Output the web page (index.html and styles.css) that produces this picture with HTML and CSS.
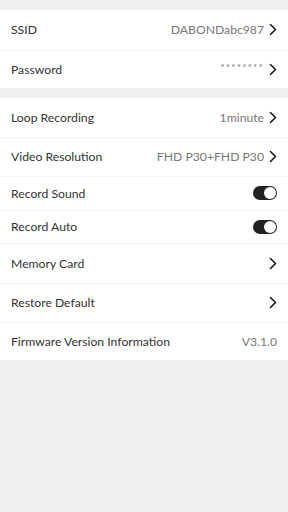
FILE: index.html
```html
<!DOCTYPE html>
<html>
<head>
<meta charset="utf-8">
<link rel="stylesheet" href="styles.css">
</head>
<body>
<div class="page">
  <div class="group">
    <div class="row h40"><span class="label">SSID</span><span class="value">DABONDabc987</span><svg class="chev" viewBox="0 0 8 13"><polyline points="1.5,1.5 6.5,6.5 1.5,11.5"/></svg></div>
    <div class="row h38"><span class="label">Password</span><span class="value stars">********</span><svg class="chev" viewBox="0 0 8 13"><polyline points="1.5,1.5 6.5,6.5 1.5,11.5"/></svg></div>
  </div>
  <div class="group">
    <div class="row h39"><span class="label">Loop Recording</span><span class="value">1minute</span><svg class="chev" viewBox="0 0 8 13"><polyline points="1.5,1.5 6.5,6.5 1.5,11.5"/></svg></div>
    <div class="row h39"><span class="label">Video Resolution</span><span class="value">FHD P30+FHD P30</span><svg class="chev" viewBox="0 0 8 13"><polyline points="1.5,1.5 6.5,6.5 1.5,11.5"/></svg></div>
    <div class="row h34"><span class="label">Record Sound</span><span class="toggle"><span class="knob"></span></span></div>
    <div class="row h33"><span class="label">Record Auto</span><span class="toggle"><span class="knob"></span></span></div>
    <div class="row h40"><span class="label">Memory Card</span><svg class="chev" viewBox="0 0 8 13"><polyline points="1.5,1.5 6.5,6.5 1.5,11.5"/></svg></div>
    <div class="row h39"><span class="label">Restore Default</span><svg class="chev" viewBox="0 0 8 13"><polyline points="1.5,1.5 6.5,6.5 1.5,11.5"/></svg></div>
    <div class="row h38"><span class="label">Firmware Version Information</span><span class="value last">V3.1.0</span></div>
  </div>
</div>
</body>
</html>
```
FILE: styles.css
```css
html, body {
  margin: 0;
  padding: 0;
  background: #efefef;
}
body {
  font-family: "Lato", "Noto Sans", sans-serif;
  width: 288px;
  height: 512px;
}
.page {
  padding-top: 10px;
  display: flex;
  flex-direction: column;
  gap: 10px;
}
.group {
  background: #fff;
  display: flex;
  flex-direction: column;
}
.row {
  display: flex;
  align-items: center;
  padding: 0 11px 1px 11px;
  position: relative;
  box-sizing: border-box;
  border-top: 1px solid #f2f2f2;
}
.row:first-child { border-top: none; }
.h40 { height: 40px; }
.h39 { height: 39px; }
.h38 { height: 38px; }
.h34 { height: 34px; }
.h33 { height: 33px; }
.label {
  flex: 1;
  font-size: 12.2px;
  color: #333;
}
.value {
  font-size: 12.2px;
  color: #777;
  margin-right: 5px;
}
.value.last { margin-right: 0; }
.stars {
  font-size: 10px;
  letter-spacing: 1.2px;
  position: relative;
  top: -2px;
}
.chev {
  width: 8px;
  height: 13px;
  fill: none;
  stroke: #1a1a1a;
  stroke-width: 1.6;
  stroke-linecap: round;
  stroke-linejoin: round;
}
.toggle {
  width: 24px;
  height: 14px;
  border-radius: 7px;
  background: #222;
  display: flex;
  align-items: center;
  justify-content: flex-end;
  padding: 0 1px;
  box-sizing: border-box;
}
.knob {
  width: 12px;
  height: 12px;
  border-radius: 50%;
  background: #fff;
}
```
